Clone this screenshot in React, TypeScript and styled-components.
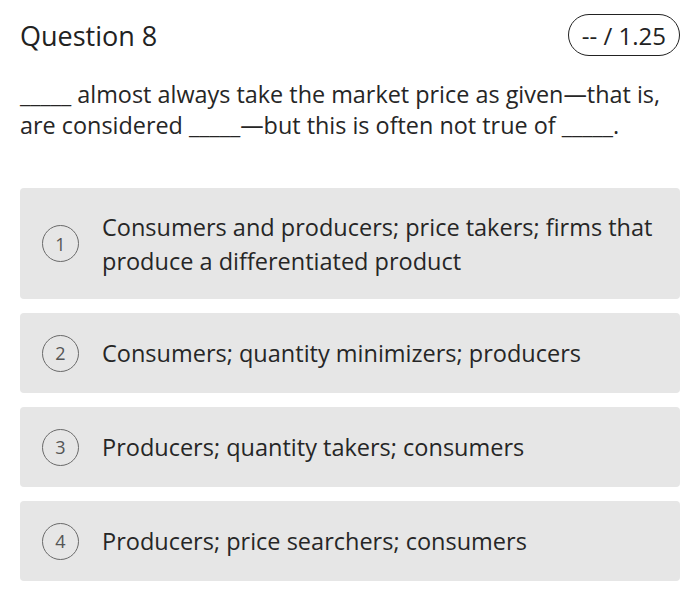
import styled, { createGlobalStyle } from "styled-components";

const GlobalStyle = createGlobalStyle`
  body {
    margin: 0;
    background: #fff;
    font-family: "Open Sans", "Noto Sans", sans-serif;
    color: #262626;
  }
`;

const Page = styled.div`
  padding: 14px 20px 20px 20px;
`;

const Header = styled.div`
  display: flex;
  justify-content: space-between;
  align-items: center;
`;

const Title = styled.h2`
  margin: 0;
  font-size: 27px;
  font-weight: 400;
  color: #222;
`;

const Points = styled.div`
  height: 40px;
  padding: 0 13px;
  display: flex;
  align-items: center;
  border: 1.5px solid #222;
  border-radius: 22px;
  font-size: 24px;
  color: #222;
`;

const Prompt = styled.p`
  margin: 23px 0 0 0;
  font-size: 23.4px;
  line-height: 31px;
  color: #262626;
`;

const Options = styled.div`
  margin-top: 47px;
  display: flex;
  flex-direction: column;
  gap: 14px;
`;

const Option = styled.div`
  display: flex;
  align-items: center;
  gap: 23px;
  padding: 21.5px 20px 21.5px 22px;
  background: #e6e6e6;
  border-radius: 4px;
`;

const Num = styled.span`
  flex: none;
  box-sizing: border-box;
  width: 37px;
  height: 37px;
  border: 1.5px solid #6a6a6a;
  border-radius: 50%;
  display: flex;
  align-items: center;
  justify-content: center;
  font-size: 18px;
  color: #555;
`;

const OptionText = styled.span`
  font-size: 23.5px;
  line-height: 34px;
  color: #262626;
`;

const options = [
  "Consumers and producers; price takers; firms that produce a differentiated product",
  "Consumers; quantity minimizers; producers",
  "Producers; quantity takers; consumers",
  "Producers; price searchers; consumers",
];

export default function App() {
  return (
    <Page>
      <GlobalStyle />
      <Header>
        <Title>Question 8</Title>
        <Points>-- / 1.25</Points>
      </Header>
      <Prompt>
        _____ almost always take the market price as given—that is, are
        considered _____—but this is often not true of _____.
      </Prompt>
      <Options>
        {options.map((text, i) => (
          <Option key={i}>
            <Num>{i + 1}</Num>
            <OptionText>{text}</OptionText>
          </Option>
        ))}
      </Options>
    </Page>
  );
}
